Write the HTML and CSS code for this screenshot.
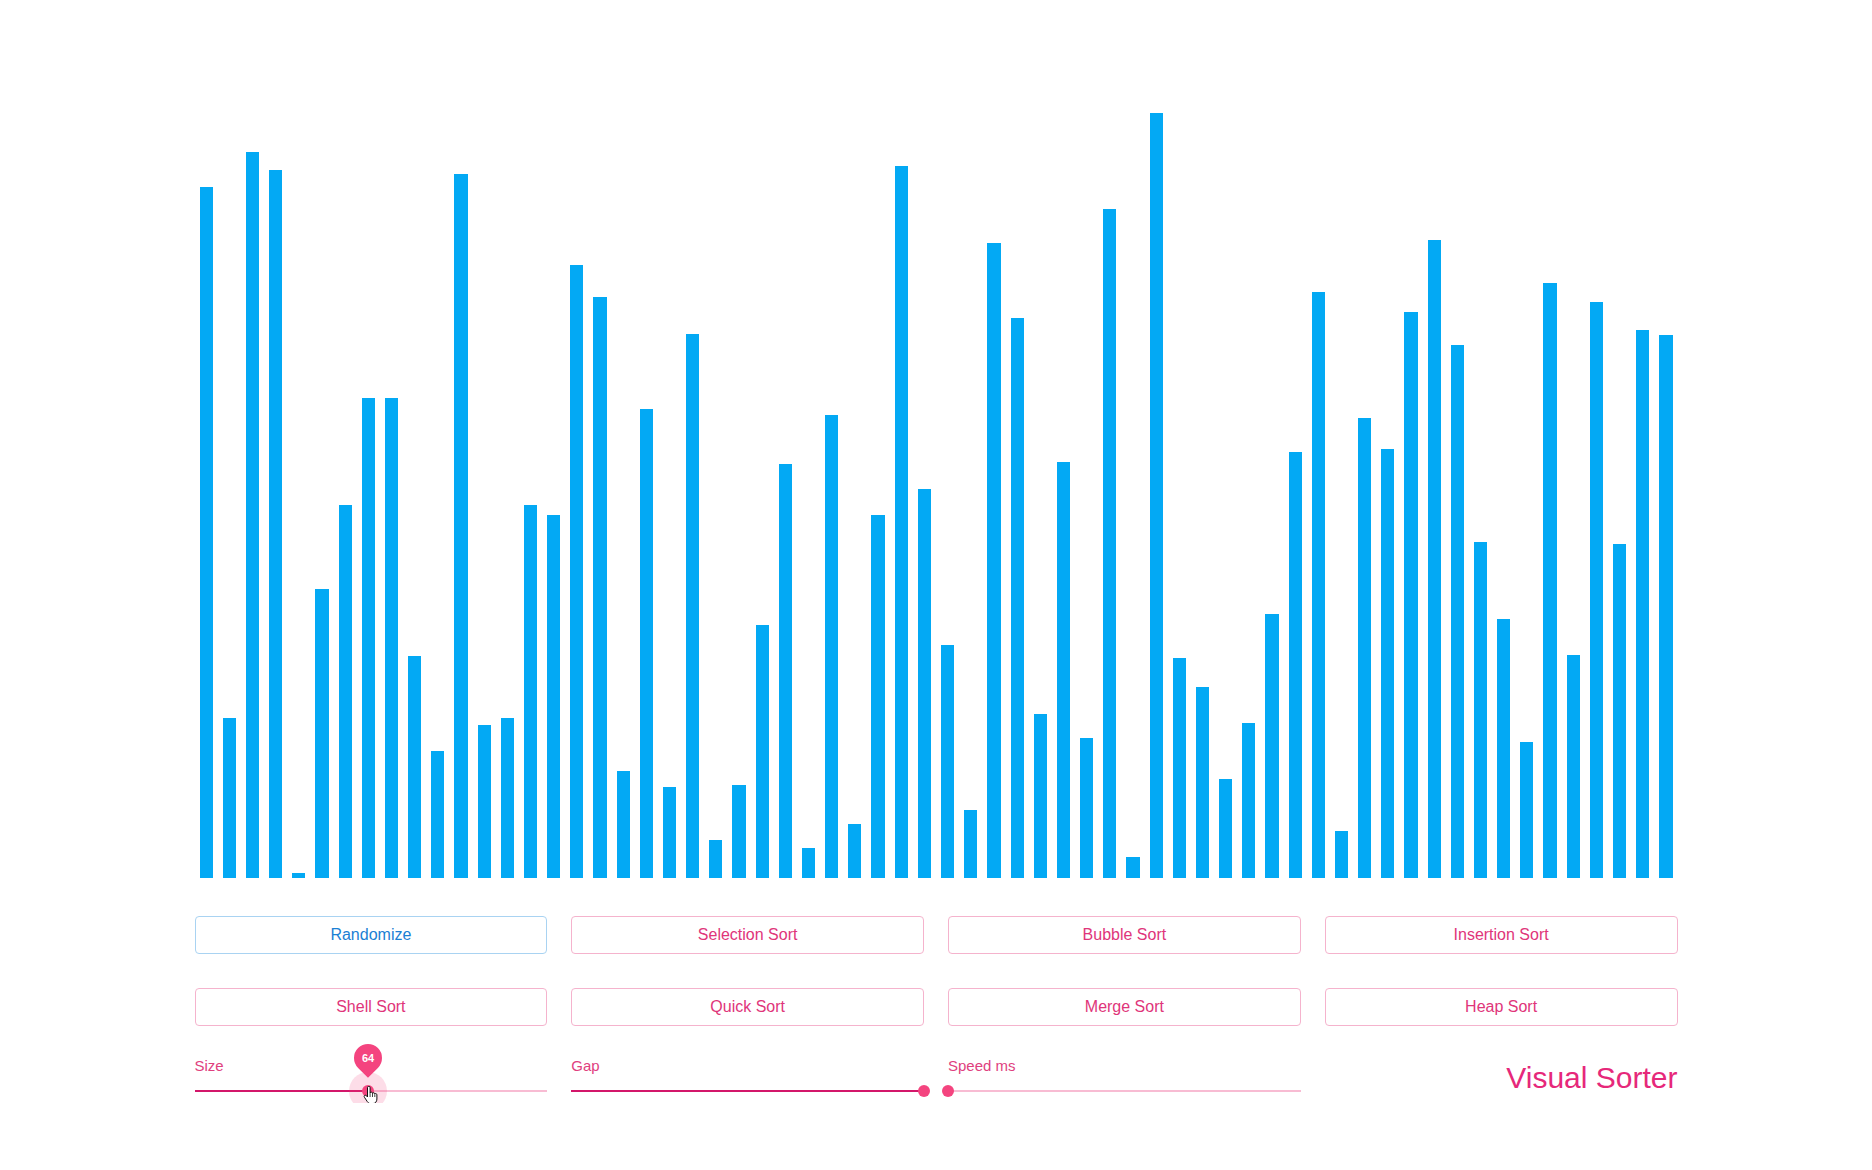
FILE: index.html
```html
<!DOCTYPE html>
<html lang="en">
<head>
<meta charset="utf-8">
<title>Visual Sorter</title>
<link rel="stylesheet" href="styles.css">
</head>
<body>
<div class="app">
  <div class="chart">
    <div class="bar" style="height:691px"></div>
    <div class="bar" style="height:160px"></div>
    <div class="bar" style="height:726px"></div>
    <div class="bar" style="height:708px"></div>
    <div class="bar" style="height:5px"></div>
    <div class="bar" style="height:289px"></div>
    <div class="bar" style="height:373px"></div>
    <div class="bar" style="height:480px"></div>
    <div class="bar" style="height:480px"></div>
    <div class="bar" style="height:222px"></div>
    <div class="bar" style="height:127px"></div>
    <div class="bar" style="height:704px"></div>
    <div class="bar" style="height:153px"></div>
    <div class="bar" style="height:160px"></div>
    <div class="bar" style="height:373px"></div>
    <div class="bar" style="height:363px"></div>
    <div class="bar" style="height:613px"></div>
    <div class="bar" style="height:581px"></div>
    <div class="bar" style="height:107px"></div>
    <div class="bar" style="height:469px"></div>
    <div class="bar" style="height:91px"></div>
    <div class="bar" style="height:544px"></div>
    <div class="bar" style="height:38px"></div>
    <div class="bar" style="height:93px"></div>
    <div class="bar" style="height:253px"></div>
    <div class="bar" style="height:414px"></div>
    <div class="bar" style="height:30px"></div>
    <div class="bar" style="height:463px"></div>
    <div class="bar" style="height:54px"></div>
    <div class="bar" style="height:363px"></div>
    <div class="bar" style="height:712px"></div>
    <div class="bar" style="height:389px"></div>
    <div class="bar" style="height:233px"></div>
    <div class="bar" style="height:68px"></div>
    <div class="bar" style="height:635px"></div>
    <div class="bar" style="height:560px"></div>
    <div class="bar" style="height:164px"></div>
    <div class="bar" style="height:416px"></div>
    <div class="bar" style="height:140px"></div>
    <div class="bar" style="height:669px"></div>
    <div class="bar" style="height:21px"></div>
    <div class="bar" style="height:765px"></div>
    <div class="bar" style="height:220px"></div>
    <div class="bar" style="height:191px"></div>
    <div class="bar" style="height:99px"></div>
    <div class="bar" style="height:155px"></div>
    <div class="bar" style="height:264px"></div>
    <div class="bar" style="height:426px"></div>
    <div class="bar" style="height:586px"></div>
    <div class="bar" style="height:47px"></div>
    <div class="bar" style="height:460px"></div>
    <div class="bar" style="height:429px"></div>
    <div class="bar" style="height:566px"></div>
    <div class="bar" style="height:638px"></div>
    <div class="bar" style="height:533px"></div>
    <div class="bar" style="height:336px"></div>
    <div class="bar" style="height:259px"></div>
    <div class="bar" style="height:136px"></div>
    <div class="bar" style="height:595px"></div>
    <div class="bar" style="height:223px"></div>
    <div class="bar" style="height:576px"></div>
    <div class="bar" style="height:334px"></div>
    <div class="bar" style="height:548px"></div>
    <div class="bar" style="height:543px"></div>
  </div>

  <div class="buttons">
    <button class="btn btn-blue">Randomize</button>
    <button class="btn">Selection Sort</button>
    <button class="btn">Bubble Sort</button>
    <button class="btn">Insertion Sort</button>
    <button class="btn">Shell Sort</button>
    <button class="btn">Quick Sort</button>
    <button class="btn">Merge Sort</button>
    <button class="btn">Heap Sort</button>
  </div>

  <div class="controls">
    <div class="control">
      <div class="label">Size</div>
      <div class="slider">
        <div class="rail"></div>
        <div class="track" style="width:49.3%"></div>
        <div class="halo" style="left:49.3%"></div>
        <div class="thumb" style="left:49.3%"></div>
        <div class="bubble" style="left:49.3%"><span class="bubble-text">64</span></div>
        <svg class="cursor" style="left:49.3%" width="15" height="19" viewBox="0 0 15 19">
          <path d="M4.5 1.6a1.3 1.3 0 0 1 2.6 0V7.2a1.2 1.2 0 0 1 2.4 0.3a1.2 1.2 0 0 1 2.3 0.5a1.2 1.2 0 0 1 2.1 0.8V13c0 2.6-1.6 4.6-4.1 4.6H7.6c-1.5 0-2.5-0.8-3.3-2L1.4 11.2c-0.5-0.8-0.2-1.600.5-1.9c0.6-0.3 1.3 0 1.7 0.5L4.5 11Z" fill="#fff" stroke="#111" stroke-width="1" stroke-linejoin="round"/>
          <path d="M7.1 7.4V11M9.5 7.6V11M11.8 8.3V11" stroke="#111" stroke-width="0.8" fill="none"/>
        </svg>
      </div>
    </div>
    <div class="control">
      <div class="label">Gap</div>
      <div class="slider">
        <div class="rail"></div>
        <div class="track" style="width:100%"></div>
        <div class="thumb" style="left:100%"></div>
      </div>
    </div>
    <div class="control">
      <div class="label">Speed ms</div>
      <div class="slider">
        <div class="rail"></div>
        <div class="thumb" style="left:0%"></div>
      </div>
    </div>
    <div class="title-cell">
      <h1 class="title">Visual Sorter</h1>
    </div>
  </div>
</div>
</body>
</html>
```

FILE: styles.css
```css
* {
  box-sizing: border-box;
}

html, body {
  margin: 0;
  padding: 0;
  background: #ffffff;
}

body {
  font-family: "Liberation Sans", Arial, Helvetica, sans-serif;
  color: #e91e63;
}

.app {
  width: 1483px;
  margin: 0 auto;
  padding-top: 78px;
}

.chart {
  height: 800px;
  display: flex;
  align-items: flex-end;
}

.bar {
  flex: 1 1 0;
  margin: 0 5px;
  background: #03a9f4;
}

.buttons {
  margin-top: 38px;
  display: grid;
  grid-template-columns: repeat(4, 1fr);
  column-gap: 24px;
  row-gap: 34px;
}

.btn {
  height: 38px;
  background: #ffffff;
  border: 1px solid #f5b3cd;
  border-radius: 4px;
  color: #e0357a;
  font-family: "Liberation Sans", Arial, Helvetica, sans-serif;
  font-size: 16px;
  padding: 0;
  cursor: pointer;
}

.btn-blue {
  border-color: #a9d3f2;
  color: #1b80d4;
}

.controls {
  margin-top: 31px;
  display: grid;
  grid-template-columns: repeat(4, 1fr);
  column-gap: 24px;
}

.control {
  display: flex;
  flex-direction: column;
  gap: 4px;
}

.label {
  font-size: 15px;
  line-height: 18px;
  color: #e0407e;
}

.slider {
  position: relative;
  height: 24px;
}

.rail {
  position: absolute;
  left: 0;
  right: 0;
  top: 11px;
  height: 2px;
  background: #f8bcd3;
}

.track {
  position: absolute;
  left: 0;
  top: 11px;
  height: 2px;
  background: #d3166a;
}

.thumb {
  position: absolute;
  top: 6px;
  width: 12px;
  height: 12px;
  margin-left: -6px;
  border-radius: 50%;
  background: #f4447f;
}

.halo {
  position: absolute;
  top: -7px;
  width: 38px;
  height: 38px;
  margin-left: -19px;
  border-radius: 50%;
  background: rgba(245, 68, 127, 0.18);
}

.bubble {
  position: absolute;
  top: -35px;
  width: 28px;
  height: 28px;
  margin-left: -14px;
  border-radius: 50% 50% 50% 0;
  background: #f4447f;
  transform: rotate(-45deg);
  display: flex;
  align-items: center;
  justify-content: center;
}

.bubble-text {
  transform: rotate(45deg);
  color: #ffffff;
  font-size: 11px;
  font-weight: bold;
}

.cursor {
  position: absolute;
  top: 7px;
  margin-left: -5px;
}

.title-cell {
  display: flex;
  justify-content: flex-end;
  padding-top: 3px;
}

.title {
  margin: 0;
  font-size: 30px;
  line-height: 36px;
  font-weight: normal;
  color: #e6287a;
}
```
